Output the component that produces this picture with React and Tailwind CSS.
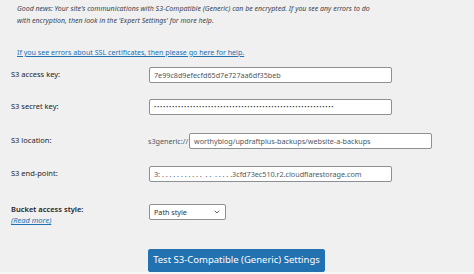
import React from 'react';
import { ChevronDown } from 'lucide-react';

const font = { fontFamily: '"Noto Sans", "Open Sans", sans-serif' };

function Field({ children, className = 'w-[243px]' }) {
  return (
    <div className={`${className} h-[16px] bg-white border border-[#8c8f94] rounded-[2px] flex items-center px-[4px] text-[7.2px] text-[#50575e] whitespace-nowrap overflow-hidden`}>
      {children}
    </div>
  );
}

function Row({ label, children, className = '' }) {
  return (
    <div className={`flex items-center ${className}`}>
      <div className="w-[138px] pl-[11px] text-[7.5px] text-[#1d2327]">{label}</div>
      {children}
    </div>
  );
}

export default function App() {
  return (
    <div className="w-[474px] h-[274px] bg-[#f0f0f1] overflow-hidden flex flex-col" style={font}>
      <div className="pl-[17px] pt-[3px] text-[7px] leading-[12px] italic text-[#3c434a]">
        <p>Good news: Your site's communications with S3-Compatible (Generic) can be encrypted. If you see any errors to do</p>
        <p>with encryption, then look in the 'Expert Settings' for more help.</p>
      </div>
      <div className="pl-[17px] mt-[19px] text-[7.1px] leading-[12px]">
        <a href="#" className="text-[#2271b1] underline">If you see errors about SSL certificates, then please go here for help.</a>
      </div>

      <Row label="S3 access key:" className="mt-[9px]">
        <div className="ml-[11px]">
          <Field>7e99c8d9efecfd65d7e727aa6df35beb</Field>
        </div>
      </Row>

      <Row label="S3 secret key:" className="mt-[16px]">
        <div className="ml-[11px]">
          <Field>
            <span className="text-[6px] tracking-[0.75px] text-[#2c3338]">{'•'.repeat(60)}</span>
          </Field>
        </div>
      </Row>

      <Row label="S3 location:" className="mt-[18px]">
        <div className="flex items-center ml-[10px]">
          <span className="text-[7.2px] text-[#50575e] w-[41px]">s3generic://</span>
          <Field className="w-[243px]">worthyblog/updraftplus-backups/website-a-backups</Field>
        </div>
      </Row>

      <Row label="S3 end-point:" className="mt-[17px]">
        <div className="ml-[11px]">
          <Field>3:&nbsp;. . . . . . . . . . .&nbsp;&nbsp;. .&nbsp;&nbsp;. . . .&nbsp;.3cfd73ec510.r2.cloudflarestorage.com</Field>
        </div>
      </Row>

      <div className="flex items-start mt-[22px]">
        <div className="w-[138px] pl-[11px] text-[7.5px] leading-[11px] text-[#1d2327]">
          <div className="font-semibold">Bucket access style:</div>
          <a href="#" className="italic text-[#2271b1] underline">(Read more)</a>
        </div>
        <div className="ml-[11px] w-[77px] h-[16px] bg-white border border-[#8c8f94] rounded-[2px] flex items-center justify-between pl-[4px] pr-[4px] text-[7.2px] text-[#2c3338]">
          <span>Path style</span>
          <ChevronDown size={8} strokeWidth={2.2} />
        </div>
      </div>

      <div className="flex mt-[23px] pl-[148px]">
        <button className="w-[177px] h-[23px] bg-[#2271b1] border border-[#2271b1] rounded-[2px] text-white text-[9.5px] flex items-center justify-center">
          Test S3-Compatible (Generic) Settings
        </button>
      </div>
      <div className="flex-1" />
      <div className="h-[2px] bg-[#f6f6f7]" />
    </div>
  );
}
